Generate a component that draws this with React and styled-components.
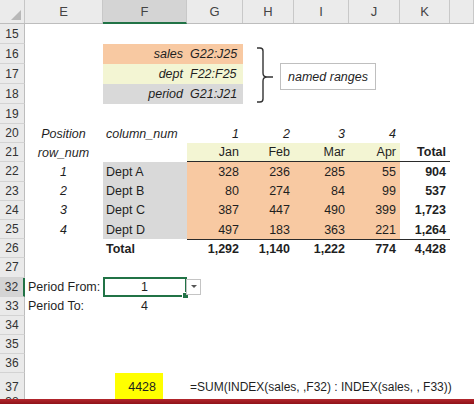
import React from 'react'
import styled, { createGlobalStyle } from 'styled-components'

const COLS = '25px 78px 84px 56px 51px 55px 51px 50px 1fr'
const ORANGE = '#f8c9a2'
const PALE = '#f3f5d3'
const GREY = '#d9d9d9'
const GREEN = '#217346'

const Global = createGlobalStyle`
  html, body { margin:0; padding:0; background:#fff; overflow:hidden; }
  body { font-family:"Liberation Sans", Arial, sans-serif; color:#1f1f1f; }
`

const Page = styled.div`
  width:474px;
  height:404px;
  display:flex;
  flex-direction:column;
`

const Sheet = styled.div`
  position:relative;
  height:399px;
  overflow:hidden;
`

const RedBar = styled.div`
  height:5px;
  background:linear-gradient(#b3262d, #8f1219);
`

const Row = styled.div`
  display:grid;
  grid-template-columns:${COLS};
  height:${({ $h }) => $h}px;
`

const HeadRow = styled(Row)`
  background:#ebebeb;
  border-bottom:1px solid #bdbdbd;
  box-sizing:border-box;
`

const Corner = styled.div`
  display:flex;
  align-items:flex-end;
  justify-content:flex-end;
  padding:0 3px 3px 0;
  border-right:1px solid #c6c6c6;
`

const ColHead = styled.div`
  display:flex;
  align-items:center;
  justify-content:center;
  font-size:13px;
  color:#444;
  border-right:1px solid #c8c8c8;
  background:${({ $sel }) => ($sel ? '#d4d4d4' : 'transparent')};
  border-bottom:${({ $sel }) => ($sel ? `2px solid ${GREEN}` : 'none')};
  margin-bottom:${({ $sel }) => ($sel ? '-1px' : '0')};
`

const RowHead = styled.div`
  display:flex;
  align-items:center;
  justify-content:center;
  font-size:12px;
  color:#333;
  background:${({ $sel }) => ($sel ? '#d4d4d4' : '#eaeaea')};
  border-bottom:1px solid #d3d3d3;
  border-right:${({ $sel }) => ($sel ? `2px solid ${GREEN}` : '1px solid #bdbdbd')};
  box-sizing:border-box;
`

const Cell = styled.div`
  display:flex;
  align-items:center;
  justify-content:${({ $al }) => ($al === 'r' ? 'flex-end' : $al === 'c' ? 'center' : 'flex-start')};
  padding:0 4px 0 3px;
  font-size:12.5px;
  font-style:${({ $it }) => ($it ? 'italic' : 'normal')};
  font-weight:${({ $b }) => ($b ? 700 : 400)};
  background:${({ $bg }) => $bg || 'transparent'};
  border-top:${({ $top }) => ($top ? '1px solid #2b2b2b' : 'none')};
  border-bottom:${({ $bot }) => ($bot ? '1px solid #2b2b2b' : 'none')};
  white-space:nowrap;
  min-width:0;
`

const Active = styled(Cell)`
  position:relative;
  border:2px solid ${GREEN};
  box-sizing:border-box;
  margin-top:-1px;
  height:calc(100% + 1px);
`

const Handle = styled.span`
  position:absolute;
  right:-4px;
  bottom:-4px;
  width:5px;
  height:5px;
  background:${GREEN};
  border:1px solid #fff;
`

const Drop = styled.span`
  position:absolute;
  left:calc(100% + 1px);
  top:0;
  width:13px;
  height:14px;
  background:#fff;
  border:1px solid #c4c4c4;
  display:flex;
  align-items:center;
  justify-content:center;
  &::after {
    content:'';
    border-left:3px solid transparent;
    border-right:3px solid transparent;
    border-top:3px solid #555;
  }
`

const Result = styled.div`
  width:48px;
  height:28px;
  margin-left:12px;
  background:#ffff00;
  display:flex;
  align-items:center;
  justify-content:flex-end;
  padding-right:7px;
  box-sizing:border-box;
  flex-shrink:0;
`

const Formula = styled(Cell)`
  font-size:12px;
  overflow:visible;
`

const Bracket = styled.svg`
  position:absolute;
  left:254px;
  top:46px;
`

const NoteBox = styled.div`
  position:absolute;
  left:280px;
  top:63px;
  width:96px;
  height:27px;
  box-sizing:border-box;
  border:1px solid #bfbfbf;
  background:#fff;
  display:flex;
  align-items:center;
  justify-content:center;
  font-size:12.5px;
  font-style:italic;
`

const letters = ['E', 'F', 'G', 'H', 'I', 'J', 'K', '']

const named = [
  ['sales', 'G22:J25', ORANGE],
  ['dept', 'F22:F25', PALE],
  ['period', 'G21:J21', GREY],
]

const depts = [
  ['Dept A', [328, 236, 285, 55], '904'],
  ['Dept B', [80, 274, 84, 99], '537'],
  ['Dept C', [387, 447, 490, 399], '1,723'],
  ['Dept D', [497, 183, 363, 221], '1,264'],
]

const totals = ['1,292', '1,140', '1,222', '774', '4,428']
const months = ['Jan', 'Feb', 'Mar', 'Apr']

const H1 = 20
const H2 = 19.2

const Empty = ({ n }) => Array.from({ length: n }, (_, i) => <Cell key={'e' + i} />)

export default function App() {
  return (
    <Page>
      <Global />
      <Sheet>
        <HeadRow $h={24}>
          <Corner>
            <svg width="10" height="10" viewBox="0 0 10 10">
              <path d="M10 0 L10 10 L0 10 Z" fill="#b8b8b8" />
            </svg>
          </Corner>
          {letters.map((l, i) => (
            <ColHead key={i} $sel={l === 'F'}>{l}</ColHead>
          ))}
        </HeadRow>

        <Row $h={H1}><RowHead>15</RowHead><Empty n={8} /></Row>
        {named.map(([name, range, bg], i) => (
          <Row $h={H1} key={name}>
            <RowHead>{16 + i}</RowHead>
            <Cell />
            <Cell $al="r" $it $bg={bg}>{name}</Cell>
            <Cell $it $bg={bg}>{range}</Cell>
            <Empty n={5} />
          </Row>
        ))}
        <Row $h={H1}><RowHead>19</RowHead><Empty n={8} /></Row>

        <Row $h={H2}>
          <RowHead>20</RowHead>
          <Cell $al="c" $it>Position</Cell>
          <Cell $it>column_num</Cell>
          {[1, 2, 3, 4].map(n => <Cell key={n} $al="r" $it>{n}</Cell>)}
          <Empty n={2} />
        </Row>
        <Row $h={H2}>
          <RowHead>21</RowHead>
          <Cell $al="c" $it>row_num</Cell>
          <Cell />
          {months.map(m => <Cell key={m} $al="r" $bg={PALE} $bot>{m}</Cell>)}
          <Cell $al="r" $b $bot>Total</Cell>
          <Cell />
        </Row>
        {depts.map(([d, vals, tot], i) => (
          <Row $h={H2} key={d}>
            <RowHead>{22 + i}</RowHead>
            <Cell $al="c" $it>{i + 1}</Cell>
            <Cell $bg={GREY}>{d}</Cell>
            {vals.map((v, j) => <Cell key={j} $al="r" $bg={ORANGE}>{v}</Cell>)}
            <Cell $al="r" $b>{tot}</Cell>
            <Cell />
          </Row>
        ))}
        <Row $h={H2}>
          <RowHead>26</RowHead>
          <Cell />
          <Cell $b>Total</Cell>
          {totals.map((t, j) => <Cell key={j} $al="r" $b $top>{t}</Cell>)}
          <Cell />
        </Row>
        <Row $h={H2}><RowHead>27</RowHead><Empty n={8} /></Row>

        <Row $h={H2}>
          <RowHead $sel>32</RowHead>
          <Cell>Period From:</Cell>
          <Active $al="c">
            1
            <Handle />
            <Drop />
          </Active>
          <Empty n={6} />
        </Row>
        <Row $h={H2}>
          <RowHead>33</RowHead>
          <Cell>Period To:</Cell>
          <Cell $al="c">4</Cell>
          <Empty n={6} />
        </Row>
        {[34, 35, 36].map(n => (
          <Row $h={H2} key={n}><RowHead>{n}</RowHead><Empty n={8} /></Row>
        ))}
        <Row $h={H2}>
          <RowHead>37</RowHead>
          <Cell />
          <Cell style={{ padding: 0, overflow: 'visible' }}>
            <Result>4428</Result>
          </Cell>
          <Formula>=SUM(INDEX(sales, ,F32) : INDEX(sales, , F33))</Formula>
          <Empty n={5} />
        </Row>
        <Row $h={H2}><RowHead>38</RowHead><Empty n={8} /></Row>

        <Bracket width="22" height="60" viewBox="0 0 22 60">
          <path
            d="M3 2 H6 Q9 2 9 5 V27 Q9 31 13 31 H19 M13 31 Q9 31 9 35 V53 Q9 56 6 56 H3"
            fill="none"
            stroke="#333"
            strokeWidth="1.4"
          />
        </Bracket>
        <NoteBox>named ranges</NoteBox>
      </Sheet>
      <RedBar />
    </Page>
  )
}
